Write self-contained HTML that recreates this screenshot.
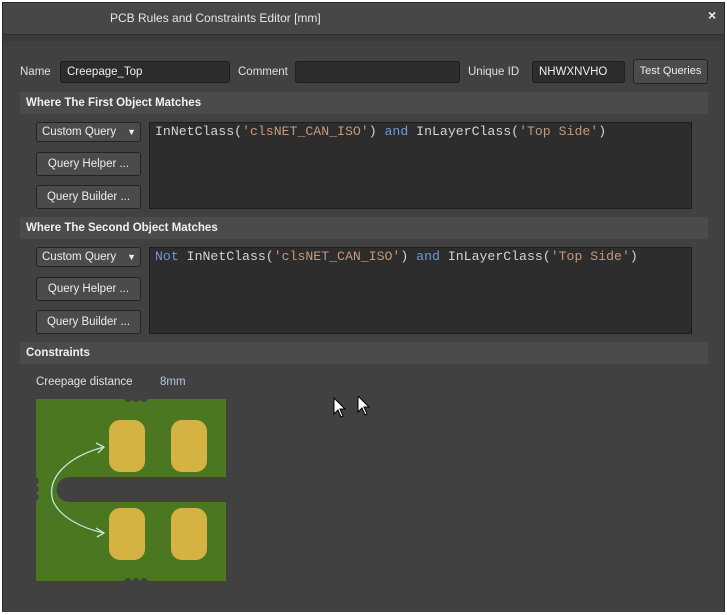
<!DOCTYPE html>
<html><head><style>
*{margin:0;padding:0;box-sizing:border-box}
body{width:727px;height:615px;background:#fff;position:relative;overflow:hidden;font-family:"Liberation Sans",sans-serif;font-size:11.5px;color:#ddd}
.win{position:absolute;left:2px;top:2px;width:723px;height:610px;background:#2a2a2a}
.title{position:absolute;left:3px;top:3px;width:721px;height:31px;background:#474747;}
.title span{position:absolute;left:107px;top:8px;font-size:12px;color:#e6e6e6}
.x{position:absolute;font-size:14px;font-weight:bold;color:#eee}
.body{position:absolute;left:3px;top:35px;width:721px;height:577px;background:#414141;border-top:6px solid #3a3a3a}
.abs{position:absolute}
.lbl{position:absolute;font-size:11.5px;color:#e0e0e0}
.inp{position:absolute;background:#2c2c2c;border:1px solid #1e1e1e;border-radius:3px;height:22px;color:#eee;padding:4px 6px;font-size:11.5px}
.btn{position:absolute;background:#4b4b4b;border:1px solid #232323;border-radius:3px;color:#eee;font-size:11.5px;text-align:center;line-height:22px;height:24px}
.hdr{position:absolute;left:20px;width:688px;height:22px;background:#4b4b4b;font-weight:bold;font-size:11.5px;color:#f0f0f0;padding:5px 6px}
.code{position:absolute;left:149px;width:543px;height:87px;background:#2d2d2d;border:1px solid #1c1c1c;font-family:"Liberation Mono",monospace;font-size:13.2px;color:#d4d4d4;padding:1px 5px;white-space:pre}
.k{color:#6f9ad6}.s{color:#c8987a}
</style></head><body>
<div class="win"></div>
<div class="title"><span>PCB Rules and Constraints Editor [mm]</span><div class="x" style="left:705px;top:4px">×</div></div>
<div class="body"></div>
<div class="lbl" style="left:20px;top:66px">Name</div>
<div class="inp" style="left:60px;top:61px;width:170px">Creepage_Top</div>
<div class="lbl" style="left:238px;top:66px">Comment</div>
<div class="inp" style="left:295px;top:61px;width:165px"></div>
<div class="lbl" style="left:468px;top:66px">Unique ID</div>
<div class="inp" style="left:532px;top:61px;width:93px">NHWXNVHO</div>
<div class="btn" style="left:633px;top:59px;width:75px;height:25px;line-height:23px;font-size:11px">Test Queries</div>

<div class="hdr" style="top:92px">Where The First Object Matches</div>
<div class="btn" style="left:36px;top:122px;width:105px;height:20px;line-height:18px;text-align:left;padding-left:5px">Custom Query<span style="position:absolute;right:4px;font-size:9px">▼</span></div>
<div class="btn" style="left:36px;top:152px;width:105px">Query Helper ...</div>
<div class="btn" style="left:36px;top:185px;width:105px">Query Builder ...</div>
<div class="code" style="top:122px">InNetClass(<span class="s">'clsNET_CAN_ISO'</span>) <span class="k">and</span> InLayerClass(<span class="s">'Top Side'</span>)</div>

<div class="hdr" style="top:217px">Where The Second Object Matches</div>
<div class="btn" style="left:36px;top:247px;width:105px;height:20px;line-height:18px;text-align:left;padding-left:5px">Custom Query<span style="position:absolute;right:4px;font-size:9px">▼</span></div>
<div class="btn" style="left:36px;top:277px;width:105px">Query Helper ...</div>
<div class="btn" style="left:36px;top:310px;width:105px">Query Builder ...</div>
<div class="code" style="top:247px"><span class="k">Not</span> InNetClass(<span class="s">'clsNET_CAN_ISO'</span>) <span class="k">and</span> InLayerClass(<span class="s">'Top Side'</span>)</div>

<div class="hdr" style="top:342px">Constraints</div>
<div class="lbl" style="left:36px;top:376px">Creepage distance</div>
<div class="lbl" style="left:160px;top:376px;color:#b8c4e8">8mm</div>

<svg class="abs" style="left:36px;top:399px" width="190" height="182" viewBox="0 0 190 182">
<rect x="0" y="0" width="190" height="182" fill="#4c7721"/>
<path d="M88 0 q4 6 8 0 q4 6 8 0 q4 6 8 0 z" fill="#414141"/>
<path d="M88 182 q4 -6 8 0 q4 -6 8 0 q4 -6 8 0 z" fill="#414141"/>
<path d="M0 78 q6 4 0 8 q6 4 0 8 q6 4 0 8 z" fill="#414141"/>
<path d="M190 78 H33 a12.5 12.5 0 0 0 0 25 H190 z" fill="#414141"/>
<rect x="73" y="21" width="36" height="52" rx="11" fill="#d5b342"/>
<rect x="135" y="21" width="36" height="52" rx="11" fill="#d5b342"/>
<rect x="73" y="109" width="36" height="52" rx="11" fill="#d5b342"/>
<rect x="135" y="109" width="36" height="52" rx="11" fill="#d5b342"/>
<path d="M68 48 C30 58 10 80 17 102 C24 118 45 129 68 134" stroke="#bfe8d8" stroke-width="1.3" fill="none"/>
<path d="M60 44 L68 48 L62 54 M60 129 L68 134 L61 138" stroke="#bfe8d8" stroke-width="1.3" fill="none"/>
</svg>
<svg class="abs" style="left:332px;top:396px" width="40" height="24"><path d="M2 2 V18 L6 14 L9 21 L11 20 L8 13 L13 13 Z" fill="#fff" stroke="#000" stroke-width="1"/><path d="M26 0 V16 L30 12 L33 19 L35 18 L32 11 L37 11 Z" fill="#fff" stroke="#000" stroke-width="1"/></svg>
</body></html>
